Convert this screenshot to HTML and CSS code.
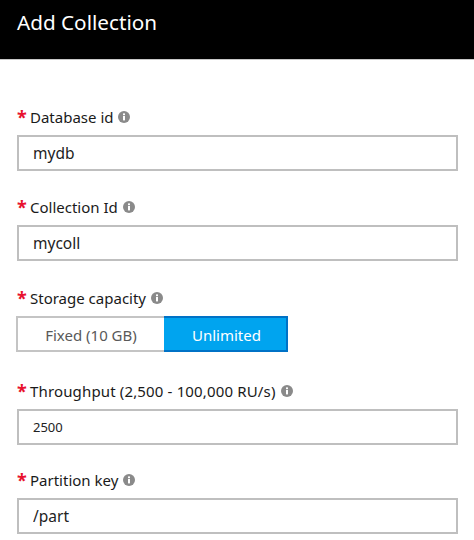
FILE: index.html
```html
<!DOCTYPE html>
<html lang="en">
  <head>
    <meta charset="UTF-8" />
    <meta name="viewport" content="width=device-width, initial-scale=1.0" />
    <link rel="stylesheet" href="styles.css">
    <title>Add Collection</title>
  </head>
  <body>
    <div class="header">Add Collection</div>
    <form class="form">
      <div class="field field-database">
        <label class="field-label">
          <span class="required">*</span>
          <span>Database id</span>
          <svg class="info" viewBox="0 0 12 12"><circle cx="6" cy="6" r="6"/><rect class="info-mark" x="5" y="5" width="2" height="4.4"/><rect class="info-mark" x="5" y="2.4" width="2" height="1.8"/></svg>
        </label>
        <input class="text-input" type="text" value="mydb" />
      </div>

      <div class="field field-collection">
        <label class="field-label">
          <span class="required">*</span>
          <span>Collection Id</span>
          <svg class="info" viewBox="0 0 12 12"><circle cx="6" cy="6" r="6"/><rect class="info-mark" x="5" y="5" width="2" height="4.4"/><rect class="info-mark" x="5" y="2.4" width="2" height="1.8"/></svg>
        </label>
        <input class="text-input" type="text" value="mycoll" />
      </div>

      <div class="field field-storage">
        <label class="field-label">
          <span class="required">*</span>
          <span>Storage capacity</span>
          <svg class="info" viewBox="0 0 12 12"><circle cx="6" cy="6" r="6"/><rect class="info-mark" x="5" y="5" width="2" height="4.4"/><rect class="info-mark" x="5" y="2.4" width="2" height="1.8"/></svg>
        </label>
        <div class="toggle">
          <div class="toggle-option">Fixed (10 GB)</div>
          <div class="toggle-option selected">Unlimited</div>
        </div>
      </div>

      <div class="field field-throughput">
        <label class="field-label">
          <span class="required">*</span>
          <span>Throughput (2,500 - 100,000 RU/s)</span>
          <svg class="info" viewBox="0 0 12 12"><circle cx="6" cy="6" r="6"/><rect class="info-mark" x="5" y="5" width="2" height="4.4"/><rect class="info-mark" x="5" y="2.4" width="2" height="1.8"/></svg>
        </label>
        <input class="text-input small" type="text" value="2500" />
      </div>

      <div class="field field-partition">
        <label class="field-label">
          <span class="required">*</span>
          <span>Partition key</span>
          <svg class="info" viewBox="0 0 12 12"><circle cx="6" cy="6" r="6"/><rect class="info-mark" x="5" y="5" width="2" height="4.4"/><rect class="info-mark" x="5" y="2.4" width="2" height="1.8"/></svg>
        </label>
        <input class="text-input" type="text" value="/part" />
      </div>
    </form>
  </body>
</html>
```

FILE: styles.css
```css
html,
body {
  margin: 0;
  height: 540px;
  overflow: hidden;
  background-color: #fff;
  font-family: "Noto Sans", "Open Sans", sans-serif;
}

.header {
  height: 60px;
  padding: 8px 0 0 17px;
  box-sizing: border-box;
  border-bottom: 1px solid #c8c8c8;
  background-color: #000;
  color: #fff;
  font-size: 20.7px;
  line-height: 28px;
}

.form {
  padding: 0 16px 0 17px;
}

.field-database {
  margin-top: 45px;
}

.field-collection {
  margin-top: 24px;
}

.field-storage {
  margin-top: 25px;
}

.field-throughput {
  margin-top: 27px;
}

.field-partition {
  margin-top: 23px;
}

.field-label {
  display: flex;
  align-items: center;
  height: 24px;
  margin-bottom: 6px;
  font-size: 15px;
  line-height: 24px;
  color: #1a1a1a;
}

.field-throughput .field-label {
  letter-spacing: 0.15px;
}

.required {
  flex: 0 0 13px;
  height: 24px;
  color: #e8112d;
  font-size: 18px;
  font-weight: 700;
  line-height: 24px;
}

.info {
  width: 12px;
  height: 12px;
  margin-left: 5px;
  fill: #8a8a8a;
}

.info-mark {
  fill: #fff;
}

.text-input {
  display: block;
  width: 100%;
  height: 36px;
  box-sizing: border-box;
  border: 2px solid #bfbfbf;
  border-radius: 0;
  padding: 0 14px;
  outline: none;
  font-family: inherit;
  font-size: 15.5px;
  color: #222;
}

.text-input.small {
  font-size: 13px;
}

.toggle {
  display: flex;
  width: 272px;
  height: 36px;
  margin-left: -1px;
}

.toggle-option {
  flex: 0 0 148px;
  box-sizing: border-box;
  border: 2px solid #c4c4c4;
  border-right: none;
  text-align: center;
  font-size: 15px;
  line-height: 34px;
  color: #595959;
}

.toggle-option.selected {
  flex: 0 0 124px;
  border: 2px solid #0072c6;
  border-left: none;
  padding-left: 3px;
  background-color: #00a4ef;
  color: #fff;
}
```
